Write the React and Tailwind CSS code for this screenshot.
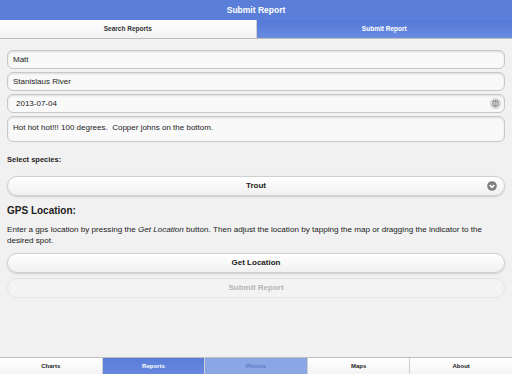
const font = { fontFamily: '"Liberation Sans", Arial, sans-serif' };

function Field({ children, tall, icon }) {
  return (
    <div
      className={`flex items-center justify-between rounded-[6px] border border-[#c8c8c8] bg-[#f9f9f9] shadow-[inset_0_1px_2px_rgba(0,0,0,0.12)] px-[5px] text-[8px] text-[#222] ${
        tall ? "h-[26px] items-start pt-[5px]" : "h-[19px]"
      }`}
    >
      <span>{children}</span>
      {icon}
    </div>
  );
}

function CalendarIcon() {
  return (
    <svg width="11" height="11" viewBox="0 0 11 11" className="mr-[-2px]">
      <circle cx="5.5" cy="5.5" r="5" fill="#e6e6e6" stroke="#c4c4c4" strokeWidth="0.8" />
      <circle cx="5.5" cy="5.5" r="3.4" fill="#8a8a8a" />
      <path d="M2.6 4.4h5.8M2.6 5.5h5.8M2.6 6.6h5.8M4.4 2.5v6M6.6 2.5v6" stroke="#e0e0e0" strokeWidth="0.5" />
    </svg>
  );
}

function ChevronIcon() {
  return (
    <svg width="10" height="10" viewBox="0 0 10 10">
      <circle cx="5" cy="5" r="4.8" fill="#7f7f7f" />
      <path d="M2.8 4.1L5 6.3 7.2 4.1" fill="none" stroke="#fff" strokeWidth="1.6" />
    </svg>
  );
}

function Button({ children, disabled, icon }) {
  return (
    <div
      className={`relative flex h-[20px] items-center justify-center rounded-full border text-[8px] font-bold ${
        disabled
          ? "border-[#e4e4e4] bg-[#f3f3f3] text-[#b5b5b5]"
          : "border-[#cfcfcf] bg-gradient-to-b from-white to-[#f1f1f1] text-[#222] shadow-[0_1px_2px_rgba(0,0,0,0.15)]"
      }`}
    >
      {children}
      {icon && <span className="absolute right-[7px] top-[4px]">{icon}</span>}
    </div>
  );
}

const bottomTabs = [
  { label: "Charts", cls: "bg-gradient-to-b from-white to-[#f4f4f4] text-[#222]" },
  { label: "Reports", cls: "bg-gradient-to-b from-[#5a7dd8] to-[#6688e0] text-white" },
  { label: "Photos", cls: "bg-[#8ba6e5] text-[#5f7cc8]" },
  { label: "Maps", cls: "bg-gradient-to-b from-white to-[#f4f4f4] text-[#222]" },
  { label: "About", cls: "bg-gradient-to-b from-white to-[#f4f4f4] text-[#222]" },
];

export default function App() {
  return (
    <div style={font} className="flex h-[374px] w-[512px] flex-col bg-[#f1f1f1]">
      <div className="flex h-[20px] items-center justify-center bg-[#5b7fd8] text-[8.5px] font-bold text-white">
        Submit Report
      </div>
      <div className="flex h-[19px] border-b border-[#bdbdbd] text-[6.5px] font-bold">
        <div className="flex flex-1 items-center justify-center border-r border-[#cfcfcf] bg-gradient-to-b from-white to-[#f2f2f2] text-[#333]">
          Search Reports
        </div>
        <div className="flex flex-1 items-center justify-center bg-gradient-to-b from-[#5378d6] to-[#6a8de2] text-white">
          Submit Report
        </div>
      </div>

      <div className="flex flex-1 flex-col px-[7px] pt-[11px]">
        <div className="flex flex-col gap-[3px]">
          <Field>Matt</Field>
          <Field>Stanislaus River</Field>
          <Field icon={<CalendarIcon />}>
            <span className="pl-[3px]">2013-07-04</span>
          </Field>
          <Field tall>Hot hot hot!!! 100 degrees.&nbsp; Copper johns on the bottom.</Field>
        </div>

        <div className="mt-[12px] text-[7.5px] font-bold text-[#222]">Select species:</div>
        <div className="mt-[11px]">
          <Button icon={<ChevronIcon />}>Trout</Button>
        </div>

        <div className="mt-[7px] text-[10px] font-bold text-[#222]">GPS Location:</div>
        <p className="mt-[6px] pr-[12px] text-[8.1px] leading-[11px] text-[#222]">
          Enter a gps location by pressing the <i>Get Location</i> button. Then adjust the location by tapping the map or dragging the indicator to the desired spot.
        </p>
        <div className="mt-[7px] flex flex-col gap-[5px]">
          <Button>Get Location</Button>
          <Button disabled>Submit Report</Button>
        </div>
      </div>

      <div className="flex h-[17px] border-t border-[#bdbdbd] text-[6px] font-bold">
        {bottomTabs.map((t, i) => (
          <div
            key={t.label}
            className={`flex flex-1 items-center justify-center ${i > 0 ? "border-l border-[#cfcfcf]" : ""} ${t.cls}`}
          >
            {t.label}
          </div>
        ))}
      </div>
    </div>
  );
}
